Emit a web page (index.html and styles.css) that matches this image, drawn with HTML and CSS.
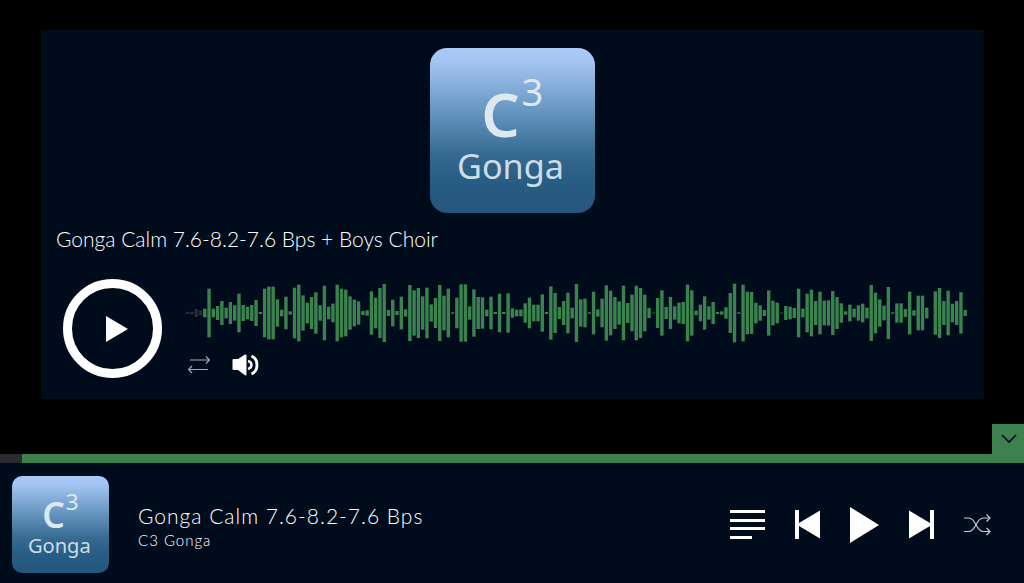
FILE: index.html
```
<!DOCTYPE html>
<html lang="en">

<head>
    <meta charset="UTF-8" />
    <meta name="viewport" content="width=device-width, initial-scale=1" />
    <title>Gonga Calm 7.6-8.2-7.6 Bps + Boys Choir</title>
    <link rel="stylesheet" href="styles.css">
</head>

<body>
    <svg class="defs" aria-hidden="true">
        <defs>
            <linearGradient id="coverFill" x1="0" y1="0" x2="0" y2="1">
                <stop offset="0" stop-color="#a9c9f8" />
                <stop offset="0.08" stop-color="#a5c5f3" />
                <stop offset="0.35" stop-color="#6c9bc6" />
                <stop offset="0.65" stop-color="#35698f" />
                <stop offset="0.8" stop-color="#285d84" />
                <stop offset="1" stop-color="#24557d" />
            </linearGradient>
            <symbol id="cover" viewBox="0 0 164 164">
                <rect width="164" height="164" rx="17" fill="url(#coverFill)" />
                <g class="cover-text">
                    <text class="cover-c" x="51" y="88">C</text>
                    <text class="cover-3" x="91" y="58">3</text>
                    <text class="cover-name" x="80" y="130">Gonga</text>
                </g>
            </symbol>
        </defs>
    </svg>

    <main class="stage">
        <section class="track">
            <svg class="track-cover" role="img" aria-label="C3 Gonga cover"><use href="#cover" /></svg>
            <h1 class="track-title">Gonga Calm 7.6-8.2-7.6 Bps + Boys Choir</h1>
            <div class="track-row">
                <button class="round-play" type="button" aria-label="Play">
                    <svg width="22" height="26" viewBox="0 0 22 26"><path d="M0 0L22 13L0 26z" fill="currentColor" /></svg>
                </button>
                <div class="track-side">
                    <svg class="wave" id="wave" viewBox="0 0 785 60" preserveAspectRatio="none" aria-hidden="true"></svg>
                    <div class="track-tools">
                        <button type="button" aria-label="Repeat">
                            <svg width="22" height="20" viewBox="0 0 22 20" fill="none" stroke="#a5abb3" stroke-width="1.2">
                                <path d="M2 5H21M18 1.500L21.500 5L18 8.500" />
                                <path d="M20 14.500H1M4 11L0.500 14.500L4 18" />
                            </svg>
                        </button>
                        <button type="button" aria-label="Volume">
                            <svg width="27" height="22" viewBox="0 0 27 22">
                                <path d="M1.5 5H6L13 0.5Q14.5 0 14.5 1.5V20.5Q14.5 22 13 21.3L6 16H1.5Q0.5 16 0.5 15V6Q0.5 5 1.5 5z" fill="currentColor" />
                                <path d="M16 7Q19.500 8 19.500 11Q19.500 14 16 15" fill="none" stroke="currentColor" stroke-width="2.4" />
                                <path d="M19.500 2Q25 4.5 25 11Q25 17.5 19.500 20" fill="none" stroke="currentColor" stroke-width="2.8" />
                            </svg>
                        </button>
                    </div>
                </div>
            </div>
        </section>
    </main>

    <footer class="bar">
        <button class="bar-toggle" type="button" aria-label="Hide player">
            <svg width="16" height="10" viewBox="0 0 16 10"><path d="M1 1L8 8L15 1" fill="none" stroke="currentColor" stroke-width="1.6" /></svg>
        </button>
        <div class="bar-progress"><div class="bar-played"></div></div>
        <div class="bar-body">
            <svg class="bar-cover" role="img" aria-label="C3 Gonga cover"><use href="#cover" /></svg>
            <div class="bar-info">
                <div class="bar-title">Gonga Calm 7.6-8.2-7.6 Bps + Boys Choir</div>
                <div class="bar-artist">C3 Gonga</div>
            </div>
            <div class="bar-controls">
                <button type="button" aria-label="Playlist">
                    <svg width="35" height="30" viewBox="0 0 35 30"><path d="M0 0H35V3H0zM0 9H35V12H0zM0 17H35V20H0zM0 26H22V29H0z" fill="currentColor" /></svg>
                </button>
                <button type="button" aria-label="Previous">
                    <svg width="25" height="29" viewBox="0 0 25 29"><path d="M0 0H4V13L25 0.5V28.5L4 16V29H0z" fill="currentColor" /></svg>
                </button>
                <button type="button" aria-label="Play">
                    <svg width="29" height="36" viewBox="0 0 29 36"><path d="M0 0L29 18L0 36z" fill="currentColor" /></svg>
                </button>
                <button type="button" aria-label="Next">
                    <svg width="25" height="29" viewBox="0 0 25 29"><path d="M25 0H21V13L0 0.5V28.5L21 16V29H25z" fill="currentColor" /></svg>
                </button>
                <button type="button" aria-label="Shuffle">
                    <svg width="27" height="22" viewBox="0 0 27 22" fill="none" stroke="#c9cdd2" stroke-width="1.2">
                        <path d="M0 4H5C12 4 12 17.500 19 17.500H26" />
                        <path d="M0 17.500H5C12 17.500 12 4 19 4H26" />
                        <path d="M22.500 0.500L26 4L22.500 7.500M22.500 14L26 17.500L22.500 21" />
                    </svg>
                </button>
            </div>
        </div>
    </footer>

    <script src="wave.js"></script>
</body>

</html>
```
FILE: styles.css
```
* {
    box-sizing: border-box;
}

body {
    margin: 0;
    min-height: 100vh;
    display: flex;
    flex-direction: column;
    justify-content: space-between;
    background: #000;
    color: #fff;
    font-family: Lato, "Open Sans", sans-serif;
}

button {
    display: flex;
    padding: 0;
    border: 0;
    background: none;
    color: inherit;
    cursor: pointer;
}

svg {
    display: block;
}

.defs {
    position: absolute;
    width: 0;
    height: 0;
}

/* cover art */
.cover-text {
    font-family: "Noto Sans", "Open Sans", sans-serif;
    fill: #dde8f1;
}

.cover-c {
    font-size: 60px;
    font-weight: 600;
}

.cover-3 {
    font-size: 38px;
}

.cover-name {
    font-size: 34px;
    text-anchor: middle;
    fill: #cbdde9;
}

/* track */
.stage {
    padding: 30px 40px 24px 41px;
}

.track {
    padding: 18px 15px 21px 15px;
    background: #000b1c;
}

.track-cover {
    width: 165px;
    height: 165px;
    margin: 0 auto 12px;
}

.track-title {
    margin: 0 0 26px;
    font-size: 21px;
    line-height: 28px;
    font-weight: 300;
}

.track-row {
    display: flex;
    gap: 24px;
    padding-left: 7px;
}

.round-play {
    flex: none;
    width: 99px;
    height: 99px;
    padding-left: 9px;
    align-items: center;
    justify-content: center;
    border: 9px solid #fff;
    border-radius: 50%;
}

.track-side {
    flex: 1;
    min-width: 0;
    padding-top: 4px;
}

.wave {
    width: 100%;
    height: 60px;
    fill: #3a834f;
}

.wave .played {
    fill: #292d32;
}

.track-tools {
    display: flex;
    align-items: center;
    gap: 22px;
    padding: 11px 0 0 2px;
}

/* bottom player */
.bar {
    background: linear-gradient(#000 30px, #000b1c 30px);
}

.bar-toggle {
    width: 32px;
    height: 30px;
    padding-left: 2px;
    margin-left: auto;
    align-items: center;
    justify-content: center;
    background: #3d824e;
    color: #000b1c;
}

.bar-progress {
    height: 9px;
    background: #3d824e;
}

.bar-played {
    width: 2.1%;
    height: 100%;
    background: #2a2a33;
}

.bar-body {
    display: flex;
    align-items: center;
    padding: 13px 33px 10px 12px;
}

.bar-cover {
    flex: none;
    width: 97px;
    height: 97px;
    margin-right: 29px;
}

.bar-info {
    width: 287px;
    padding-top: 4px;
    overflow: hidden;
    white-space: nowrap;
    letter-spacing: 1px;
}

.bar-title {
    font-size: 21px;
    line-height: 26px;
    font-weight: 300;
}

.bar-artist {
    font-size: 15px;
    line-height: 22px;
    font-weight: 300;
}

.bar-controls {
    display: flex;
    align-items: center;
    gap: 30px;
    margin-left: auto;
}
```
FILE: wave.js
```
const SVG_NS = "http://www.w3.org/2000/svg";
const STEP = 4.283;
const PLAYED = 4;

// half height of every bar, on a scale where 90 fills the box
const peaks = [
    3, 4, 12, 8, 13, 73, 13, 21, 36, 16, 33, 23, 58, 24, 19, 24, 39, 3, 73, 79,
    79, 41, 10, 49, 5, 76, 85, 53, 31, 48, 62, 23, 82, 19, 28, 85, 73, 70, 50, 40,
    35, 6, 8, 65, 46, 75, 87, 9, 40, 6, 49, 11, 84, 68, 75, 50, 76, 26, 45, 84,
    52, 73, 2, 46, 86, 86, 20, 71, 48, 47, 10, 49, 3, 58, 3, 59, 14, 10, 10, 29,
    46, 25, 25, 56, 3, 80, 60, 18, 36, 61, 16, 87, 41, 43, 2, 64, 11, 43, 83, 67,
    48, 35, 82, 30, 55, 82, 75, 55, 15, 1, 45, 68, 18, 48, 20, 31, 33, 85, 68, 7,
    25, 50, 20, 33, 3, 5, 17, 60, 88, 2, 85, 64, 63, 31, 23, 9, 68, 37, 31, 1,
    21, 19, 15, 73, 13, 58, 70, 36, 64, 37, 38, 66, 48, 29, 5, 25, 13, 23, 28, 16,
    84, 61, 41, 22, 78, 2, 29, 29, 12, 64, 8, 52, 52, 16, 0, 65, 75, 36, 67, 28,
    36, 62, 9
];

const wave = document.getElementById("wave");

peaks.forEach((peak, i) => {
    const half = peak / 3;
    const bar = document.createElementNS(SVG_NS, "rect");
    bar.setAttribute("x", i * STEP);
    bar.setAttribute("y", 30 - half);
    bar.setAttribute("width", 3.4);
    bar.setAttribute("height", half * 2);
    if (i < PLAYED) bar.setAttribute("class", "played");
    wave.appendChild(bar);
});
```
